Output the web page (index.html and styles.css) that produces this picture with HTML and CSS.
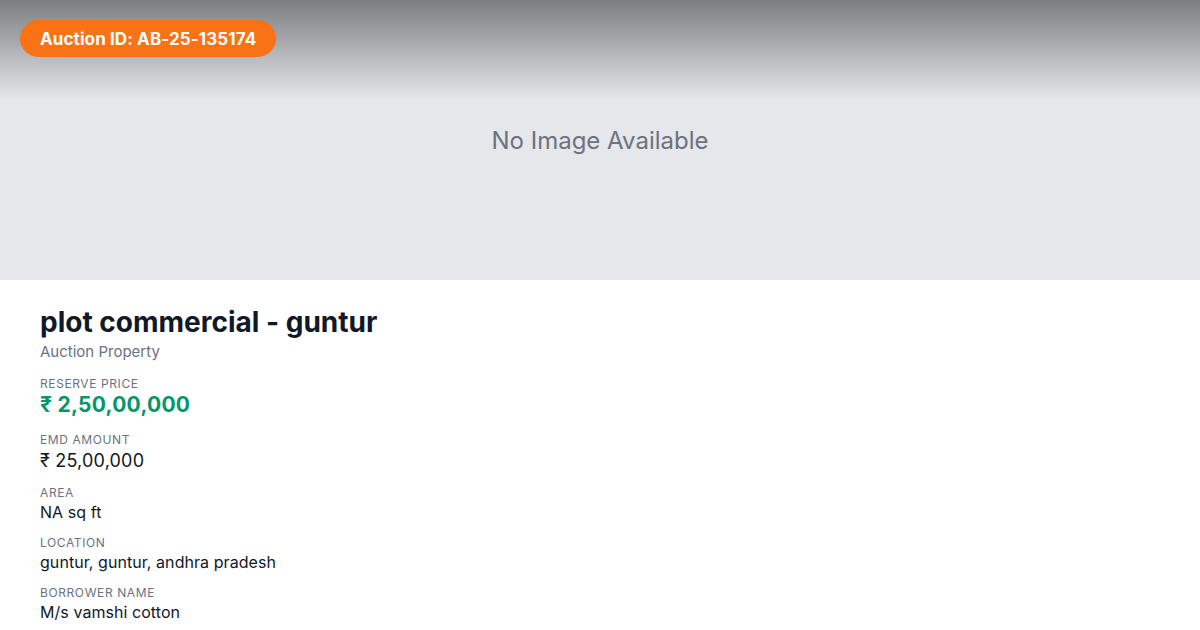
FILE: index.html
```html
<!DOCTYPE html>
<html>
<head>
<meta charset="utf-8">
<link rel="stylesheet" href="styles.css">
</head>
<body>
<div class="card">
  <div class="media">
    <div class="shade"></div>
    <span class="badge">Auction ID: AB-25-135174</span>
    <span class="noimg">No Image Available</span>
  </div>
  <div class="body">
    <h1 class="title">plot commercial - guntur</h1>
    <div class="subtitle">Auction Property</div>
    <div class="field field-price">
      <div class="label">Reserve Price</div>
      <div class="value price">₹ 2,50,00,000</div>
    </div>
    <div class="field field-emd">
      <div class="label">EMD Amount</div>
      <div class="value emd">₹ 25,00,000</div>
    </div>
    <div class="field">
      <div class="label">Area</div>
      <div class="value">NA sq ft</div>
    </div>
    <div class="field">
      <div class="label">Location</div>
      <div class="value">guntur, guntur, andhra pradesh</div>
    </div>
    <div class="field">
      <div class="label">Borrower Name</div>
      <div class="value">M/s vamshi cotton</div>
    </div>
  </div>
</div>
</body>
</html>
```
FILE: styles.css
```css
* { box-sizing: border-box; }
html, body { margin: 0; padding: 0; }
body {
  width: 1200px;
  height: 630px;
  overflow: hidden;
  background: #ffffff;
  font-family: Inter, "Noto Sans", sans-serif;
  color: #111827;
}
.media {
  position: relative;
  height: 280px;
  background: #e5e7eb;
  display: flex;
  align-items: center;
  justify-content: center;
}
.shade {
  position: absolute;
  left: 0; right: 0; top: 0;
  height: 100px;
  background: linear-gradient(to bottom, rgba(0,0,0,0.46), rgba(0,0,0,0));
}
.badge {
  position: absolute;
  left: 20px;
  top: 20px;
  height: 37px;
  padding: 0 20px;
  display: flex;
  align-items: center;
  background: #f97316;
  color: #ffffff;
  font-weight: 700;
  font-size: 17px;
  letter-spacing: 0.1px;
  border-radius: 19px;
}
.noimg {
  font-size: 24px;
  color: #6b7280;
}
.body {
  padding: 25px 40px 0;
}
.title {
  margin: 0;
  font-size: 28px;
  line-height: 34px;
  font-weight: 700;
  color: #111827;
}
.subtitle {
  font-size: 15px;
  line-height: 20px;
  color: #6b7280;
  margin-top: 3px;
  margin-bottom: 14px;
}
.field { margin-bottom: 11px; }
.field-price { margin-bottom: 14px; }
.field-emd { margin-bottom: 11px; }
.label {
  font-size: 12px;
  line-height: 15px;
  letter-spacing: 0.05em;
  text-transform: uppercase;
  color: #6b7280;
}
.field-price .label,
.field-emd .label { line-height: 16px; }
.value {
  font-size: 16px;
  line-height: 24px;
  letter-spacing: 0.06px;
  color: #111827;
}
.price {
  font-size: 21px;
  line-height: 26px;
  font-weight: 700;
  letter-spacing: 0.25px;
  color: #059669;
}
.emd {
  font-size: 18px;
  line-height: 26px;
  letter-spacing: 0.2px;
}
```
